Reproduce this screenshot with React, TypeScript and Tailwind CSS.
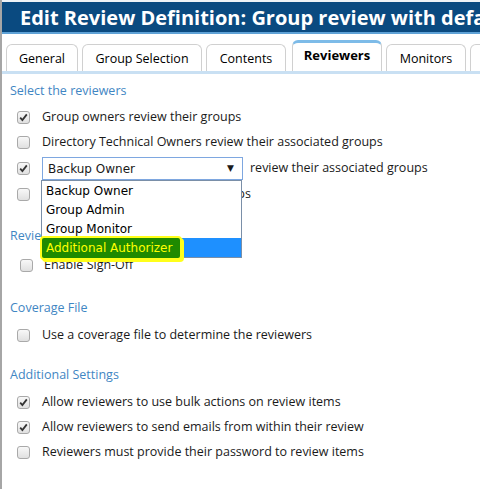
import * as React from 'react'

const TABS = [
  { label: 'General', w: 'w-[72px]' },
  { label: 'Group Selection', w: 'w-[120px]' },
  { label: 'Contents', w: 'w-[80px]' },
  { label: 'Reviewers', w: 'w-[90px]', active: true },
  { label: 'Monitors', w: 'w-[80px]' },
  { label: 'Notifications', w: 'w-[100px]' },
]

const OPTIONS = ['Backup Owner', 'Group Admin', 'Group Monitor', 'Additional Authorizer']

function Checkbox({ checked }: { checked?: boolean }) {
  return (
    <span className="flex h-[13px] w-[13px] shrink-0 items-center justify-center rounded-[3px] border border-[#a9a9a9] bg-gradient-to-b from-[#f8f8f8] to-[#e0e0e0]">
      {checked && (
        <svg width="9" height="9" viewBox="0 0 9 9">
          <path d="M1.2 4.6 L3.4 7 L7.8 1.4" fill="none" stroke="#333" strokeWidth="1.8" />
        </svg>
      )}
    </span>
  )
}

function Row({ checked, children, indent }: { checked?: boolean; children: React.ReactNode; indent?: boolean }) {
  return (
    <div className={`flex h-[25px] items-center ${indent ? 'pl-[10px] gap-[11px]' : 'pl-[7px] gap-[12px]'}`}>
      <Checkbox checked={checked} />
      <span className="whitespace-nowrap">{children}</span>
    </div>
  )
}

function Heading({ children, className }: { children: React.ReactNode; className?: string }) {
  return <div className={`h-[20px] leading-[20px] text-[12.5px] text-[#3f86c3] ${className ?? ''}`}>{children}</div>
}

export default function App() {
  return (
    <div className="relative h-[489px] w-[480px] overflow-hidden border-l-2 border-[#a6a6a6] bg-white text-[12.5px] text-[#1a1a1a] [font-family:'Open_Sans',sans-serif]">
      {/* Title bar */}
      <div className="h-[2px] bg-[#eef2f6]" />
      <div className="h-[32px] whitespace-nowrap border-b-[2px] border-[#5fa2d6] bg-[#0a4a80] pl-[18px] text-[20px] font-bold leading-[31px] text-white">
        Edit Review Definition: Group review with default settings
      </div>

      {/* Tabs */}
      <div className="mt-[6px] flex items-end gap-[4px] whitespace-nowrap border-b-[3px] border-[#c9e0f3] pl-[4px]">
        {TABS.map((t) =>
          t.active ? (
            <div
              key={t.label}
              className={`${t.w} ml-[2px] flex h-[31px] shrink-0 items-start justify-center rounded-t-[6px] border border-b-0 border-t-[3px] border-[#d0d0d0] border-t-[#7dbbe8] bg-white pt-[3px] text-[13px] font-bold text-black`}
            >
              {t.label}
            </div>
          ) : (
            <div
              key={t.label}
              className={`${t.w} flex h-[27px] shrink-0 items-center justify-center rounded-t-[6px] border border-b-0 border-[#d0d0d0] bg-white pt-[2px] text-[12.5px] text-black`}
            >
              {t.label}
            </div>
          )
        )}
      </div>

      {/* Content */}
      <div className="pl-[8px]">
        <Heading className="mt-[7px]">Select the reviewers</Heading>
        <div className="mt-[4px]">
          <Row checked>Group owners review their groups</Row>
          <Row>Directory Technical Owners review their associated groups</Row>
          <div className="flex h-[27px] items-center gap-[12px] pl-[7px]">
            <Checkbox checked />
            <div className="flex h-[23px] w-[201px] shrink-0 items-center justify-between border border-[#7ea7e0] bg-white pl-[5px] pr-[8px] text-[12px] [font-family:'DejaVu_Sans',sans-serif]">
              <span>Backup Owner</span>
              <span className="text-[9px]">▼</span>
            </div>
            <span className="-ml-[5px] whitespace-nowrap">review their associated groups</span>
          </div>
          <Row>Group Monitors review their groups</Row>
        </div>

        <Heading className="mt-[19px]">Reviewer Sign-Off</Heading>
        <div className="mt-[7px]">
          <Row indent>Enable Sign-Off</Row>
        </div>

        <Heading className="mt-[20px]">Coverage File</Heading>
        <div className="mt-[5px]">
          <Row>Use a coverage file to determine the reviewers</Row>
        </div>

        <Heading className="mt-[17px]">Additional Settings</Heading>
        <div className="mt-[5px]">
          <Row checked>Allow reviewers to use bulk actions on review items</Row>
          <Row checked>Allow reviewers to send emails from within their review</Row>
          <Row>Reviewers must provide their password to review items</Row>
        </div>
      </div>

      {/* Open dropdown list */}
      <div className="absolute left-[39px] top-[180px] w-[201px] border border-[#7a8fa8] bg-white text-[12px] [font-family:'DejaVu_Sans',sans-serif]">
        {OPTIONS.map((o, i) =>
          i === 3 ? (
            <div key={o} className="flex h-[19px] items-center bg-[#1e90ff]">
              <span className="flex h-[20px] items-center rounded-[2px] bg-[#1f8a00] pl-[4px] pr-[8px] text-[#ffff00] shadow-[0_0_0_2px_#ffff1a,2px_2px_0_2px_#ffff1a]">
                {o}
              </span>
            </div>
          ) : (
            <div key={o} className="flex h-[19px] items-center pl-[4px] text-black">
              {o}
            </div>
          )
        )}
      </div>
    </div>
  )
}
